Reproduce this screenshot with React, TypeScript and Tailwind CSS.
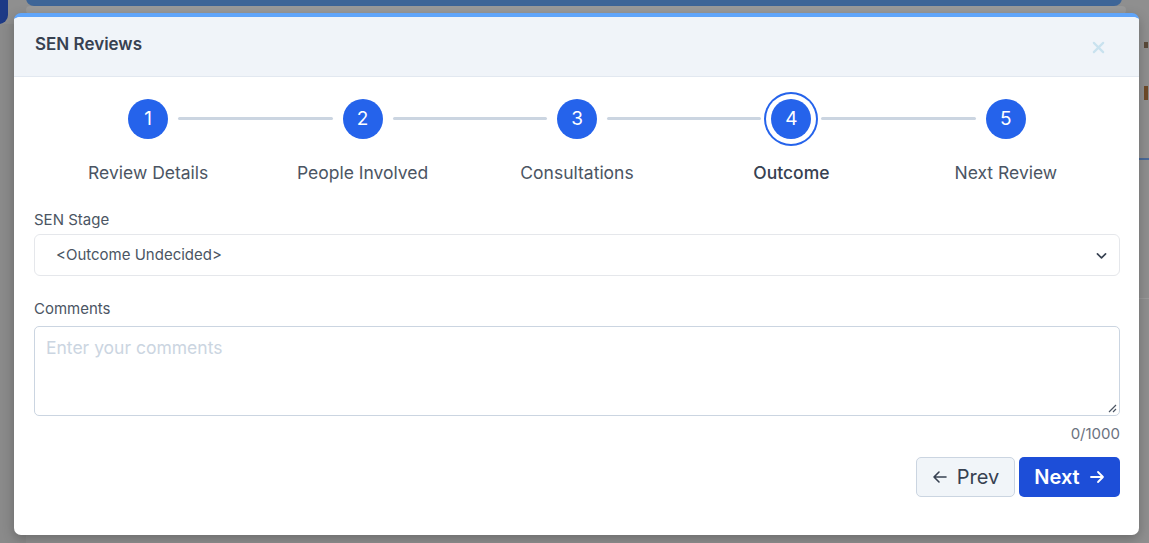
import React from "react";

const steps = ["Review Details", "People Involved", "Consultations", "Outcome", "Next Review"];

export default function App() {
  return (
    <div className="relative w-[1149px] h-[543px] overflow-hidden bg-[#8f8f8f]" style={{ fontFamily: "Inter, 'Noto Sans', sans-serif" }}>
      {/* dimmed page behind */}
      <div className="absolute left-[-10px] top-[-8px] w-[18px] h-[32px] rounded-full bg-[#1d3a86]" />
      <div className="absolute left-[26px] top-[-10px] w-[1096px] h-[16px] rounded-b-[8px] bg-[#3e6597]" />
      <div className="absolute left-[26px] top-[6px] w-[1100px] h-[8px] bg-[#9a9a9a] rounded-[6px]" />
      <div className="absolute left-0 top-[24px] w-[26px] h-[519px] bg-[#8a8a8a]" />
      <div className="absolute right-[1px] top-[42px] w-[4px] h-[6px] bg-[#5a4a3a]" />
      <div className="absolute right-[1px] top-[86px] w-[4px] h-[14px] bg-[#6e4a28]" />
      <div className="absolute right-0 top-[158px] w-[10px] h-[2px] bg-[#4a6a98]" />
      <div className="absolute right-0 top-[298px] w-[10px] h-[1px] bg-[#9a9a9a]" />

      {/* modal */}
      <div className="absolute left-[14px] top-[13px] w-[1125px] h-[522px] rounded-[7px] bg-white overflow-hidden shadow-[0_4px_12px_rgba(0,0,0,0.25)] border-t-4 border-[#60a5fa] flex flex-col">
        <div className="h-[60px] bg-[#f0f4f9] border-b border-[#e2e8f0] flex items-center justify-between pl-[21px] pr-[34px]">
          <h2 className="text-[17px] font-semibold text-[#374151] mb-[3px]">SEN Reviews</h2>
          <svg width="13" height="13" viewBox="0 0 14 14" className="mt-[1px]">
            <path d="M2 2 L12 12 M12 2 L2 12" stroke="#c9e2ef" strokeWidth="2.4" strokeLinecap="round" />
          </svg>
        </div>

        <div className="pl-[20px] pr-[19px] pt-[15px] flex flex-col">
          {/* stepper */}
          <div className="flex px-[7px]">
            {steps.map((s, i) => {
              const active = i === 3;
              return (
                <div key={s} className="relative flex-1 flex flex-col items-center">
                  {i < steps.length - 1 && (
                    <div className="absolute top-[25px] left-[calc(50%+30px)] w-[calc(100%-60px)] h-[3px] bg-[#cbd5e1] rounded-full" />
                  )}
                  <div className="h-[54px] flex items-center">
                    <div
                      className={
                        active
                          ? "w-[40px] h-[40px] rounded-full bg-[#2563eb] text-white flex items-center justify-center text-[19px] ring-2 ring-[#2563eb] ring-offset-[5px] ring-offset-white"
                          : "w-[40px] h-[40px] rounded-full bg-[#2563eb] text-white flex items-center justify-center text-[19px]"
                      }
                    >
                      {i + 1}
                    </div>
                  </div>
                  <div className={active ? "mt-[14px] text-[17.5px] text-[#374151] font-medium" : "mt-[14px] text-[17.5px] text-[#4b5563]"}>
                    {s}
                  </div>
                </div>
              );
            })}
          </div>

          {/* SEN stage */}
          <label className="mt-[24px] text-[15px] text-[#4b5563] leading-[20px]">SEN Stage</label>
          <div className="mt-[4px] h-[42px] border border-[#e5e7eb] rounded-[6px] flex items-center justify-between pl-[21px] pr-[11px]">
            <span className="text-[15px] text-[#4b5563]">&lt;Outcome Undecided&gt;</span>
            <svg width="13" height="13" viewBox="0 0 16 16">
              <path d="M3 6 L8 11 L13 6" fill="none" stroke="#374151" strokeWidth="2" strokeLinecap="round" strokeLinejoin="round" />
            </svg>
          </div>

          {/* comments */}
          <label className="mt-[23px] text-[15px] text-[#4b5563] leading-[20px]">Comments</label>
          <div className="relative mt-[7px] h-[90px] border border-[#cbd5e1] rounded-[5px] pl-[11px] pt-[8px]">
            <span className="text-[17.5px] text-[#cbd5e1]">Enter your comments</span>
            <svg className="absolute right-[2px] bottom-[2px]" width="10" height="10" viewBox="0 0 10 10">
              <path d="M9 2 L2 9 M9 6 L6 9" stroke="#4b5563" strokeWidth="1.2" />
            </svg>
          </div>
          <div className="mt-[8px] text-right text-[15px] text-[#6b7280] leading-[20px]">0/1000</div>

          {/* buttons */}
          <div className="mt-[13px] flex justify-end gap-[4px]">
            <button className="w-[99px] h-[40px] rounded-[5px] bg-[#f1f5f9] border border-[#cbd5e1] flex items-center justify-center gap-[9px] text-[20px] text-[#374151]">
              <svg width="16" height="16" viewBox="0 0 16 16">
                <path d="M14 8 H2 M7 3 L2 8 L7 13" fill="none" stroke="#374151" strokeWidth="1.6" strokeLinecap="round" strokeLinejoin="round" />
              </svg>
              Prev
            </button>
            <button className="w-[101px] h-[40px] rounded-[5px] bg-[#1d4ed8] flex items-center justify-center gap-[9px] text-[20px] font-semibold text-white">
              Next
              <svg width="16" height="16" viewBox="0 0 16 16">
                <path d="M2 8 H14 M9 3 L14 8 L9 13" fill="none" stroke="#ffffff" strokeWidth="1.8" strokeLinecap="round" strokeLinejoin="round" />
              </svg>
            </button>
          </div>
        </div>
      </div>
    </div>
  );
}
